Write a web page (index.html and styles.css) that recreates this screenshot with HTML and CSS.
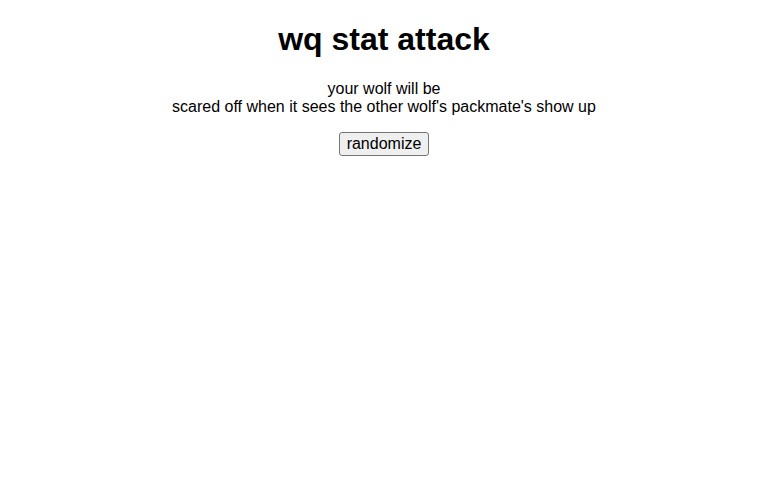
FILE: index.html
```html
<!DOCTYPE html>
<html>
<head>
<meta charset="utf-8">
<title>wq stat attack</title>
<link rel="stylesheet" href="styles.css">
</head>
<body>
<main class="page">
  <h1 class="title">wq stat attack</h1>
  <p class="result">your wolf will be<br>scared off when it sees the other wolf's packmate's show up</p>
  <button class="randomize" type="button">randomize</button>
</main>
</body>
</html>
```

FILE: styles.css
```css
body {
  margin: 0 8px;
  font-family: "Liberation Sans", Arial, sans-serif;
  font-size: 16px;
  color: #000;
  background: #fff;
}

.page {
  text-align: center;
  padding-top: 21.44px;
}

.title {
  font-size: 32px;
  font-weight: bold;
  margin: 0 0 21.44px;
}

.result {
  margin: 16px 0;
}

.randomize {
  font: inherit;
  line-height: 18px;
  color: #000;
  background: #efefef;
  border: 1px solid #767676;
  border-radius: 3px;
  padding: 2px 7px;
}
```
